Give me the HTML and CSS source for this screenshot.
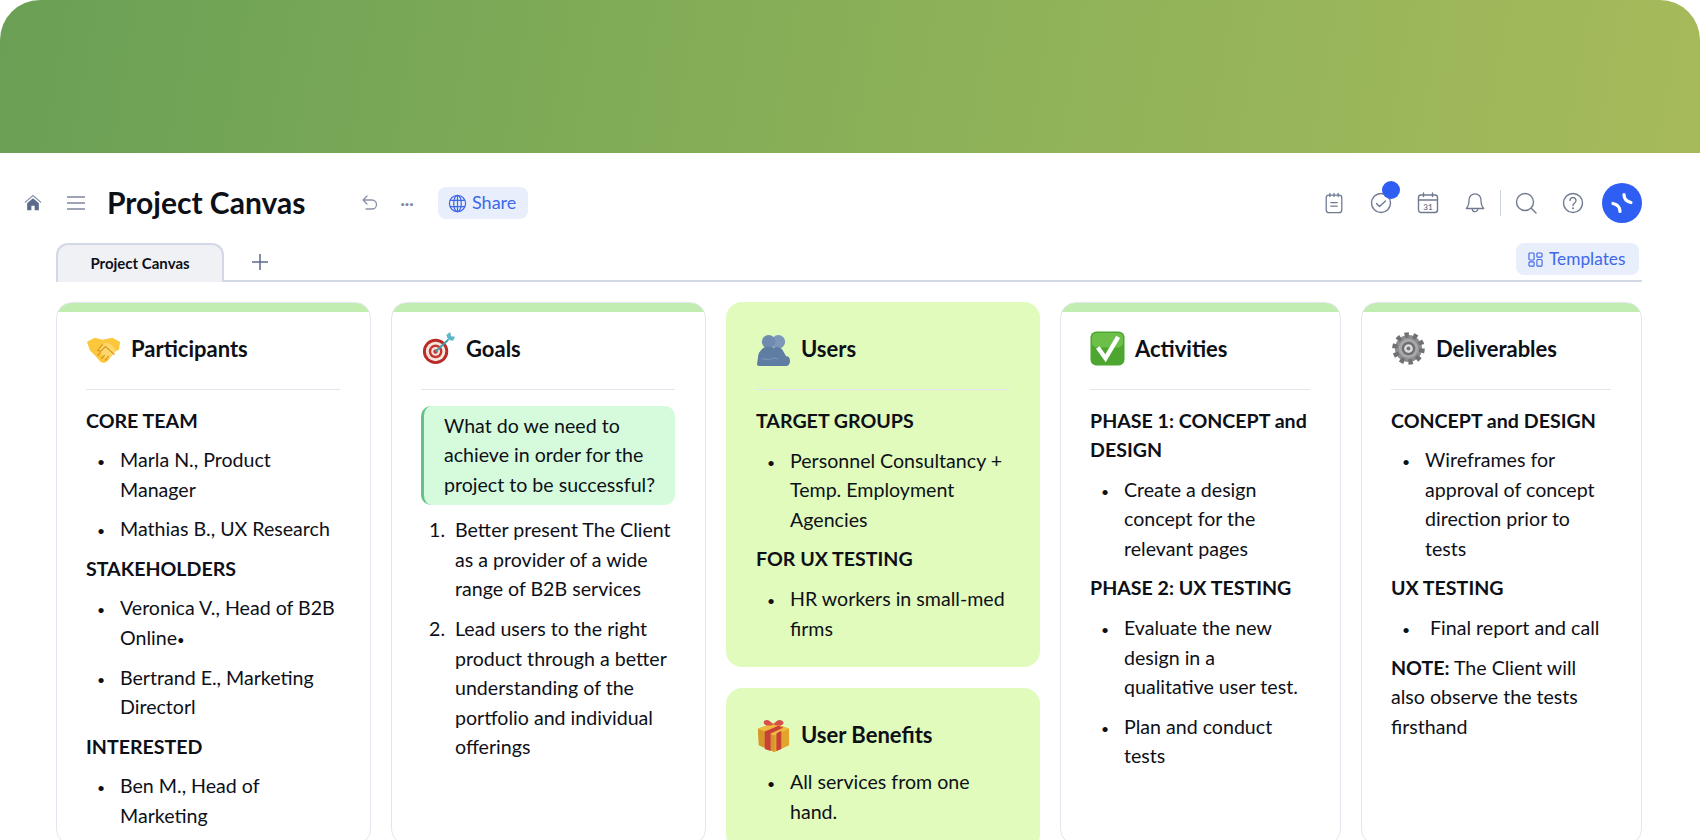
FILE: index.html
```html
<!DOCTYPE html>
<html lang="en">
<head>
<meta charset="utf-8">
<title>Project Canvas</title>
<link rel="stylesheet" href="styles.css">
</head>
<body>
<div class="banner"></div>
<header class="topbar">
  <div class="topbar-left">
    <svg class="ic home" viewBox="0 0 20 20"><path d="M1 9.500 10 1.800l9 7.700" stroke="#8a94ab" stroke-width="1.300" fill="none"/><path d="M10 4.800 3.500 10.300V18h4.700v-5h3.600v5h4.700v-7.700z" fill="#5c6b8a"/></svg>
    <svg class="ic burger" viewBox="0 0 18 14"><path d="M0 1h18M0 7h18M0 13h18" stroke="#7d879c" stroke-width="1.400" fill="none"/></svg>
    <h1 class="doc-title">Project Canvas</h1>
    <svg class="ic undo" viewBox="0 0 18 18"><path d="M6 2 2 6l4 4M2 6h9a4.500 4.500 0 0 1 0 9H5" stroke="#8a93a6" stroke-width="1.300" fill="none" stroke-linecap="round" stroke-linejoin="round"/></svg>
    <span class="dots">···</span>
    <button class="soft-btn share">
      <svg viewBox="0 0 20 20"><g stroke="#3d68e8" stroke-width="1.300" fill="none"><circle cx="10" cy="10" r="8.500"/><ellipse cx="10" cy="10" rx="4" ry="8.500"/><path d="M10 1.500v17M2.200 6.800h15.600M2.200 13.200h15.600"/></g></svg>
      Share
    </button>
  </div>
  <div class="topbar-right">
    <svg class="tool" viewBox="0 0 22 24"><g stroke="#6f7a90" stroke-width="1.400" fill="none" stroke-linecap="round"><rect x="2.500" y="3.500" width="17" height="19" rx="3"/><path d="M6.500 1.500v3.500M11 1.500v3.500M15.500 1.500v3.500M7.500 11.500h7M7.500 15.500h7"/></g></svg>
    <span class="tool-wrap">
      <svg class="tool" viewBox="0 0 22 22"><g stroke="#6f7a90" stroke-width="1.400" fill="none" stroke-linecap="round" stroke-linejoin="round"><circle cx="11" cy="11" r="9.500"/><path d="m6.500 11.500 3 3 6-5.500"/></g></svg>
      <span class="badge"></span>
    </span>
    <svg class="tool" viewBox="0 0 22 22"><g stroke="#6f7a90" stroke-width="1.400" fill="none" stroke-linecap="round"><rect x="1.500" y="3" width="19" height="17.500" rx="2.500"/><path d="M1.500 8h19M6.500 1v3.500M15.500 1v3.500"/></g><text x="11" y="17.500" class="cal-num">31</text></svg>
    <svg class="tool" viewBox="0 0 22 24"><g stroke="#6f7a90" stroke-width="1.400" fill="none" stroke-linejoin="round"><path d="M11 2a6.500 6.500 0 0 0-6.500 6.500c0 5.500-1.200 7.500-3 9.500h19c-1.800-2-3-4-3-9.500A6.500 6.500 0 0 0 11 2z"/><path d="M8 18.500a3 3 0 0 0 6 0"/></g></svg>
    <span class="vr"></span>
    <svg class="tool" viewBox="0 0 22 22"><g stroke="#6f7a90" stroke-width="1.400" fill="none" stroke-linecap="round"><circle cx="10" cy="10" r="8.500"/><path d="m16.500 16.500 4.500 4.500"/></g></svg>
    <svg class="tool" viewBox="0 0 22 22"><g stroke="#6f7a90" stroke-width="1.400" fill="none" stroke-linecap="round"><circle cx="11" cy="11" r="9.500"/><path d="M8 8.500a3 3 0 1 1 4.600 2.500c-1 .7-1.600 1.200-1.600 2.500"/></g><circle cx="11" cy="16.300" r="1" fill="#6f7a90"/></svg>
    <span class="avatar"><svg viewBox="0 0 24 24"><g stroke="#fff" stroke-width="3.200" fill="none" stroke-linecap="round"><path d="M14 3.500c0 4 2.500 7 7 8"/><path d="M3 12.500c4.500 1 7 4 7 8"/></g></svg></span>
  </div>
</header>
<nav class="tabbar">
  <div class="tab">Project Canvas</div>
  <svg class="add" viewBox="0 0 16 16"><path d="M8 0v16M0 8h16" stroke="#5c6b8a" stroke-width="1.500"/></svg>
  <button class="soft-btn templates">
    <svg viewBox="0 0 16 16"><g stroke="#3d68e8" stroke-width="1.200" fill="none"><rect x="1" y="1" width="5.500" height="7.500" rx="1"/><rect x="9.500" y="1" width="5.500" height="4.500" rx="1"/><rect x="1" y="10.500" width="5.500" height="4.500" rx="1"/><rect x="9.500" y="8" width="5.500" height="7" rx="1"/></g></svg>
    Templates
  </button>
</nav>
<main class="board">
  <section class="card bordered">
    <div class="card-head">
      <svg class="emoji" viewBox="0 0 36 36"><path d="M1 11 9 7l8 2 5-1 5-1 8 4-1 8-4 2-7 9-4 3-4-1-5-6-6-6z" fill="#fbc83d"/><path d="m12 20 7-8 6 1 6 7-8 9-3-1z" fill="#fdd76b"/><path d="m17 14-5 6 3 1 5-5 9 8M16 28l3-3M20 30l3-4M12 25l3-3" stroke="#d9921c" stroke-width="1.200" fill="none" stroke-linecap="round"/></svg>
      <h2>Participants</h2>
    </div>
    <div class="rule"></div>
    <p class="strong">CORE TEAM</p>
    <ul>
      <li>Marla N., Product<br>Manager</li>
      <li>Mathias B., UX Research</li>
    </ul>
    <p class="strong">STAKEHOLDERS</p>
    <ul>
      <li>Veronica V., Head of B2B<br>Online<span class="dot">•</span></li>
      <li>Bertrand E., Marketing<br>Directorl</li>
    </ul>
    <p class="strong">INTERESTED</p>
    <ul>
      <li>Ben M., Head of<br>Marketing</li>
    </ul>
  </section>
  <section class="card bordered">
    <div class="card-head">
      <svg class="emoji" viewBox="0 0 36 36"><circle cx="15" cy="21" r="13" fill="#b92b27"/><circle cx="15" cy="21" r="10" fill="#f3e7e0"/><circle cx="15" cy="21" r="7" fill="#c8352d"/><circle cx="15" cy="21" r="4.500" fill="#f3e7e0"/><circle cx="15" cy="21" r="2.300" fill="#c8352d"/><path d="M15 21 28 9" stroke="#4a9bb0" stroke-width="2"/><path d="m26 4 2 5 5 1 2-4-4-.5L30 1z" fill="#5cb8c9"/></svg>
      <h2>Goals</h2>
    </div>
    <div class="rule"></div>
    <p class="callout">What do we need to<br>achieve in order for the<br>project to be successful?</p>
    <ol>
      <li>Better present The Client<br>as a provider of a wide<br>range of B2B services</li>
      <li>Lead users to the right<br>product through a better<br>understanding of the<br>portfolio and individual<br>offerings</li>
    </ol>
  </section>
  <div class="stack">
    <section class="card lime">
      <div class="card-head">
        <svg class="emoji" viewBox="0 0 36 36"><circle cx="23" cy="10" r="7" fill="#7d97b8"/><circle cx="13" cy="10" r="7" fill="#6f8bb0"/><path d="M8 16c-3 3-6 5-6 11l-1 6c0 1 1 2 2 2h28c2 0 4-2 4-5s-1-5-4-5l-4-7c-3-3-6-3-9-2-3-1-7-1-10 0z" fill="#5f7da3"/><path d="M6 28c3-2 6 2 9 0s6-1 8 0" stroke="#86a0c0" stroke-width=".8" fill="none"/></svg>
        <h2>Users</h2>
      </div>
      <div class="rule"></div>
      <p class="strong">TARGET GROUPS</p>
      <ul>
        <li>Personnel Consultancy +<br>Temp. Employment<br>Agencies</li>
      </ul>
      <p class="strong">FOR UX TESTING</p>
      <ul>
        <li>HR workers in small-med<br>firms</li>
      </ul>
    </section>
    <section class="card lime benefits">
      <div class="card-head">
        <svg class="emoji" viewBox="0 0 36 36"><path d="M2 11 18 5l16 6v17l-15 7L3 28z" fill="#e2a42a"/><path d="m2 11 17 7v17L3 28z" fill="#d6972a"/><path d="m2 11 16-6 16 6-15 7z" fill="#eebb3f"/><path d="M9 14v18l6 2V16zM9 14l14-6 5 2-13 6zM21 16v18l5-2V13z" fill="#c9403a"/><path d="M18 7c-4-6-9-6-10-3s5 5 10 3zm0 0c3-6 8-6 10-3s-5 5-10 3z" fill="#d9504a"/></svg>
        <h2>User Benefits</h2>
      </div>
      <ul>
        <li>All services from one<br>hand.</li>
      </ul>
    </section>
  </div>
  <section class="card bordered">
    <div class="card-head">
      <svg class="emoji" viewBox="0 0 36 36"><rect x="0.500" y="0.500" width="35" height="35" rx="6" fill="#4ca62f"/><rect x="2" y="2" width="32" height="15" rx="5" fill="#6cc04a"/><path d="m8 17 8 11L29 6" stroke="#fff" stroke-width="4.500" fill="none" stroke-linejoin="miter"/></svg>
      <h2>Activities</h2>
    </div>
    <div class="rule"></div>
    <p class="strong">PHASE 1: CONCEPT and<br>DESIGN</p>
    <ul>
      <li>Create a design<br>concept for the<br>relevant pages</li>
    </ul>
    <p class="strong">PHASE 2: UX TESTING</p>
    <ul>
      <li>Evaluate the new<br>design in a<br>qualitative user test.</li>
      <li>Plan and conduct<br>tests</li>
    </ul>
  </section>
  <section class="card bordered">
    <div class="card-head">
      <svg class="emoji" viewBox="0 0 36 36"><circle cx="18" cy="18" r="14" fill="#8d8d90"/><circle cx="18" cy="18" r="14" fill="none" stroke="#6f6f74" stroke-width="5.500" stroke-dasharray="4.300 4.500"/><circle cx="18" cy="18" r="10" fill="#a8a8ab"/><circle cx="18" cy="18" r="7" fill="#6d6d72"/><circle cx="18" cy="18" r="4.500" fill="#dcdcdc"/><circle cx="18" cy="18" r="2" fill="#77777b"/></svg>
      <h2>Deliverables</h2>
    </div>
    <div class="rule"></div>
    <p class="strong">CONCEPT and DESIGN</p>
    <ul>
      <li>Wireframes for<br>approval of concept<br>direction prior to<br>tests</li>
    </ul>
    <p class="strong">UX TESTING</p>
    <ul>
      <li>&nbsp;Final report and call</li>
    </ul>
    <p><b>NOTE:</b> The Client will<br>also observe the tests<br>firsthand</p>
  </section>
</main>
</body>
</html>
```
FILE: styles.css
```css
* { box-sizing: border-box; }
html, body { margin: 0; height: 840px; overflow: hidden; background: #fff; }
body { font-family: "Lato", "Liberation Sans", sans-serif; color: #0e1018; font-size: 19.600px; line-height: 29.600px; }
button { font: inherit; border: 0; }
h1, h2, p, ul, ol { margin: 0; }

.banner { height: 153px; border-radius: 40px 40px 0 0; background: linear-gradient(100deg, #6aa055 0%, #8cb158 55%, #a6ba5b 100%); }

.topbar { height: 90px; padding: 10px 58px 0 24px; display: flex; align-items: center; justify-content: space-between; }
.topbar-left, .topbar-right { display: flex; align-items: center; }
.ic { display: block; flex: none; }
.home { width: 18px; height: 18px; }
.burger { width: 18px; height: 14px; margin-left: 25px; }
.doc-title { font-size: 30px; line-height: 40px; font-weight: 700; margin: 0 0 3px 22px; width: 254px; }
.undo { width: 18px; height: 18px; }
.dots { width: 16px; margin-left: 20px; color: #7d879c; font-size: 16px; line-height: 18px; font-weight: 700; text-align: center; }
.soft-btn { display: flex; align-items: center; background: #e8eefc; color: #3d68e8; border-radius: 8px; height: 32px; }
.share { margin-left: 23px; width: 90px; padding-left: 10px; gap: 5px; font-size: 18px; }
.share svg { width: 19px; height: 19px; }

.tool { width: 22px; height: 22px; display: block; margin-left: 25px; }
.tool-wrap { position: relative; display: block; }
.badge { position: absolute; top: -11px; right: -8px; width: 18px; height: 18px; border-radius: 50%; background: #2f5ef2; }
.cal-num { font-family: "Lato", sans-serif; font-size: 8px; font-weight: 700; fill: #6f7a90; text-anchor: middle; }
.vr { width: 1px; height: 26px; background: #cdd3e0; margin-left: 14px; margin-right: -11px; }
.avatar { width: 40px; height: 40px; margin-left: 18px; border-radius: 50%; background: #2f5ef2; display: flex; align-items: center; justify-content: center; }
.avatar svg { width: 24px; height: 24px; }

.tabbar { margin: 0 58px 0 56px; height: 39px; border-bottom: 2px solid #d3d8e6; display: flex; align-items: flex-end; position: relative; }
.tab { width: 168px; height: 39px; margin-bottom: -2px; background: #eff1f5; border: 2px solid #d3d8e6; border-bottom: 0; border-radius: 12px 12px 0 0; text-align: center; font-size: 15px; line-height: 37px; font-weight: 700; }
.add { width: 16px; height: 16px; margin: 0 0 10px 28px; }
.templates { position: absolute; right: 3px; top: 0; width: 123px; padding-left: 12px; gap: 6px; font-size: 17.300px; }
.templates svg { width: 15px; height: 15px; }

.board { margin: 20px 58px 0 56px; display: grid; grid-template-columns: 315px 315px 314px 281px 281px; grid-auto-rows: 543px; column-gap: 20px; height: 538px; overflow: hidden; }
.card { padding: 29px 30px 14px; border-radius: 16px; }
.bordered { border: 1.500px solid #e3e6ee; background: linear-gradient(#c2edb0 9px, #fff 9px); padding: 27.500px 30px 14px 29px; }
.lime { background: #e0fbbb; }
.stack { display: flex; flex-direction: column; gap: 21px; }
.benefits { flex: 1; }
.card-head { display: flex; align-items: center; gap: 10px; height: 36px; }
.emoji { width: 35px; height: 35px; flex: none; }
h2 { font-size: 22px; line-height: 28px; font-weight: 700; }
.rule { height: 1px; background: #e2e5ee; margin: 22px 0 16px; }
p { margin-bottom: 10px; }
.strong { font-weight: 700; }
ul, ol { padding: 0; list-style: none; counter-reset: item; }
li { margin-bottom: 10px; padding-left: 34px; counter-increment: item; }
li::before { display: inline-block; width: 23px; margin-left: -23px; font-size: 14px; line-height: 1; }
ul > li::before { content: "•"; }
ol > li::before { content: counter(item) "."; width: 26px; margin-left: -26px; font-size: 19.600px; }
.dot { font-size: 13px; line-height: 1; }
.callout { background: #d5fbdc; border-left: 3px solid #66c08b; border-radius: 10px; padding: 5px 10px 6px 20px; margin-bottom: 10px; }
.benefits ul { margin-top: 14px; }
```
